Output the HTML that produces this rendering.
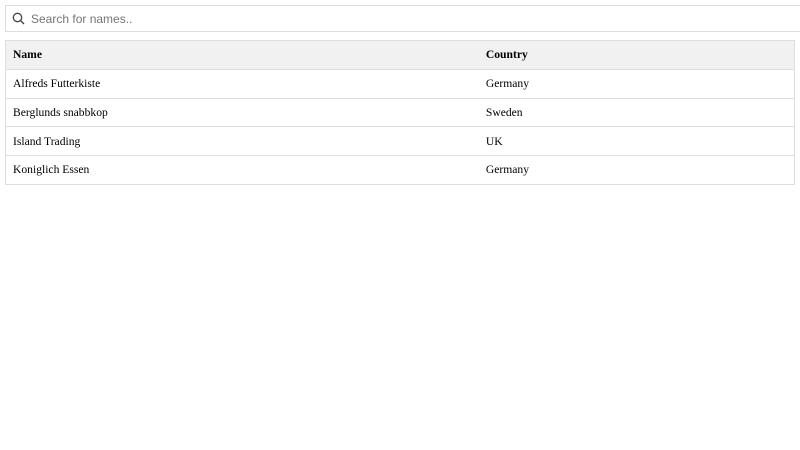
<!DOCTYPE html>
<html><head><style>
body{margin:0;background:#fff;font-family:"Liberation Serif",serif;}
.search{position:absolute;left:5px;top:5px;width:810px;height:27px;box-sizing:border-box;border:1px solid #ddd;}
.search span{position:absolute;left:25px;top:6px;font:12px "Liberation Sans",sans-serif;color:#757575;}
.search svg{position:absolute;left:6px;top:6px;}
table{position:absolute;left:5px;top:40px;width:790px;border-collapse:collapse;border:1px solid #ddd;font-size:11.6px;}
th,td{text-align:left;padding:0 7px;height:27.75px;border-bottom:1px solid #ddd;}
th{background:#f1f1f1;font-weight:bold;}
tr:last-child td{border-bottom:none;}
</style></head><body>
<div class="search"><svg width="13" height="13" viewBox="0 0 13 13"><circle cx="5.5" cy="5.5" r="4.2" fill="none" stroke="#444" stroke-width="1.3"/><line x1="8.6" y1="8.6" x2="12" y2="12" stroke="#444" stroke-width="1.4"/></svg><span>Search for names..</span></div>
<table>
<tr><th style="width:60%">Name</th><th>Country</th></tr>
<tr><td>Alfreds Futterkiste</td><td>Germany</td></tr>
<tr><td>Berglunds snabbkop</td><td>Sweden</td></tr>
<tr><td>Island Trading</td><td>UK</td></tr>
<tr><td>Koniglich Essen</td><td>Germany</td></tr>
</table>
</body></html>
